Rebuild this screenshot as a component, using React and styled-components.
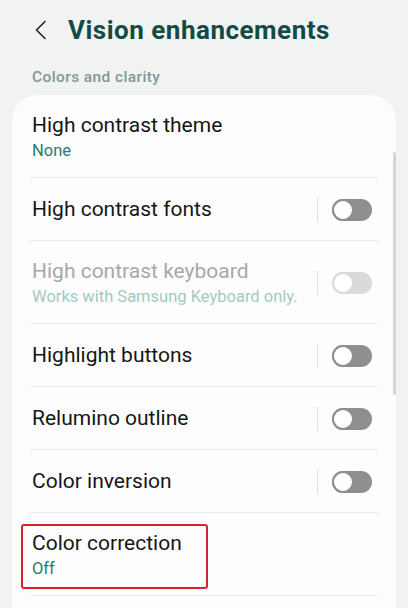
import React from 'react';
import styled, { createGlobalStyle } from 'styled-components';

const GlobalStyle = createGlobalStyle`
  html, body {
    margin: 0;
    padding: 0;
    background: #f1f2f2;
    overflow: hidden;
  }
  body {
    font-family: Roboto, "Noto Sans", sans-serif;
    -webkit-font-smoothing: antialiased;
  }
`;

const Screen = styled.div`
  width: 408px;
  height: 608px;
  overflow: hidden;
  background: #f1f2f2;
`;

const Header = styled.header`
  height: 60px;
  display: flex;
  align-items: center;
  padding-left: 32px;
  gap: 20px;
`;

const BackButton = styled.button`
  width: 16px;
  height: 24px;
  padding: 0;
  border: none;
  background: transparent;
  display: flex;
  align-items: center;
  justify-content: center;
  cursor: pointer;
`;

const Title = styled.h1`
  margin: 0;
  font-size: 26px;
  font-weight: 700;
  color: #114b44;
  letter-spacing: 0.5px;
`;

const SectionLabel = styled.div`
  padding: 7px 32px 8px;
  font-size: 15.5px;
  line-height: 20px;
  font-weight: 500;
  letter-spacing: 0.4px;
  color: #7f9995;
`;

const Card = styled.section`
  position: relative;
  margin: 0 12px;
  padding: 0 18px;
  background: #fdfdfd;
  border-radius: 26px 26px 0 0;
  min-height: 600px;
`;

const ScrollThumb = styled.div`
  position: absolute;
  right: 0;
  top: 57px;
  width: 3px;
  height: 243px;
  border-radius: 2px;
  background: #d6d6d6;
`;

const Row = styled.div`
  display: flex;
  align-items: center;
  padding: ${p => (p.twoLine ? '18px 6px 16px 2px' : '19px 6px 18px 2px')};
  border-bottom: 1px solid #e9e9e9;
`;

const TextBlock = styled.div`
  flex: 1;
  min-width: 0;
  position: relative;
`;

const RowTitle = styled.div`
  font-size: 21px;
  line-height: 25px;
  color: ${p => (p.disabled ? '#a8a8a8' : '#161616')};
`;

const RowSub = styled.div`
  padding-top: 3px;
  font-size: 16.5px;
  line-height: 20px;
  color: ${p => (p.disabled ? '#a3c9c1' : '#2a7a6e')};
`;

const Highlight = styled.div`
  position: absolute;
  left: -11px;
  top: -7px;
  width: 187px;
  height: 65px;
  box-sizing: border-box;
  border: 2px solid #d8222c;
  border-radius: 3px;
  pointer-events: none;
`;

const SwitchArea = styled.div`
  display: flex;
  align-items: center;
  gap: 14px;
`;

const VDivider = styled.div`
  width: 1px;
  height: 24px;
  background: #dedede;
`;

const Track = styled.div`
  width: 40px;
  height: 22px;
  border-radius: 11px;
  background: ${p => (p.disabled ? '#dadada' : '#8f8f8f')};
  position: relative;
`;

const Knob = styled.div`
  position: absolute;
  left: 0;
  top: 0;
  width: 22px;
  height: 22px;
  box-sizing: border-box;
  border-radius: 50%;
  background: #ffffff;
  border: 2px solid ${p => (p.disabled ? '#dadada' : '#8f8f8f')};
`;

const Toggle = ({ disabled }) => (
  <SwitchArea>
    <VDivider />
    <Track disabled={disabled}>
      <Knob disabled={disabled} />
    </Track>
  </SwitchArea>
);

const items = [
  { title: 'High contrast theme', sub: 'None' },
  { title: 'High contrast fonts', toggle: true },
  { title: 'High contrast keyboard', sub: 'Works with Samsung Keyboard only.', toggle: true, disabled: true },
  { title: 'Highlight buttons', toggle: true },
  { title: 'Relumino outline', toggle: true },
  { title: 'Color inversion', toggle: true },
  { title: 'Color correction', sub: 'Off', highlighted: true },
];

export default function App() {
  return (
    <Screen>
      <GlobalStyle />
      <Header>
        <BackButton aria-label="Back">
          <svg width="13" height="20" viewBox="0 0 13 20" fill="none">
            <path d="M11 1.5 L2.5 10 L11 18.5" stroke="#222" strokeWidth="1.6" strokeLinecap="round" strokeLinejoin="round" />
          </svg>
        </BackButton>
        <Title>Vision enhancements</Title>
      </Header>
      <SectionLabel>Colors and clarity</SectionLabel>
      <Card>
        <ScrollThumb />
        {items.map(item => (
          <Row key={item.title} twoLine={!!item.sub}>
            <TextBlock>
              {item.highlighted && <Highlight />}
              <RowTitle disabled={item.disabled}>{item.title}</RowTitle>
              {item.sub && <RowSub disabled={item.disabled}>{item.sub}</RowSub>}
            </TextBlock>
            {item.toggle && <Toggle disabled={item.disabled} />}
          </Row>
        ))}
      </Card>
    </Screen>
  );
}
